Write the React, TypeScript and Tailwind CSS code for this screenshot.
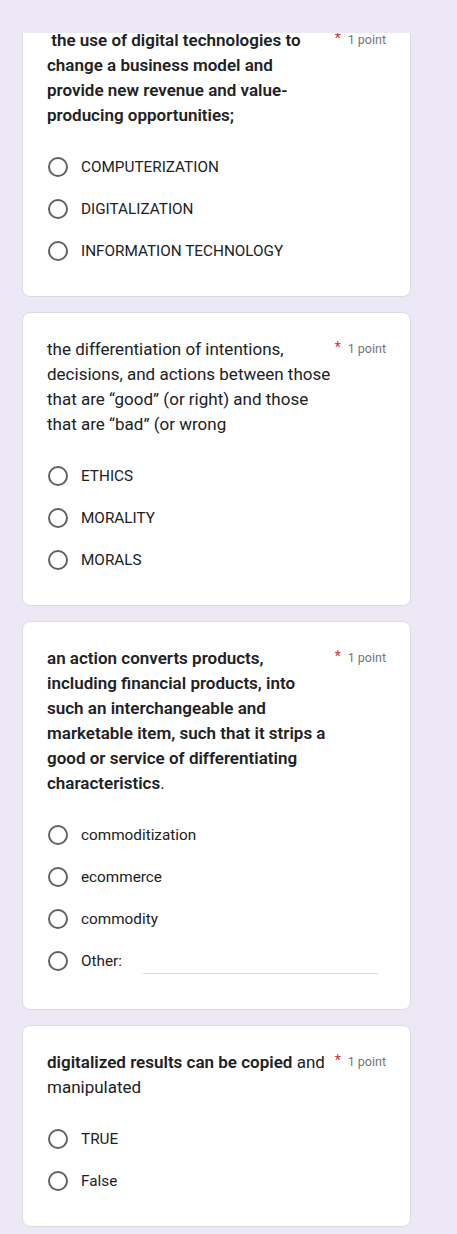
import React from "react";

type Question = {
  id: number;
  title: React.ReactNode;
  options: string[];
  other?: boolean;
  first?: boolean;
};

const questions: Question[] = [
  {
    id: 1,
    first: true,
    title: (
      <span className="font-semibold">
        {"\u00a0the use of digital technologies to change a business model and provide new revenue and value-producing opportunities;"}
      </span>
    ),
    options: ["COMPUTERIZATION", "DIGITALIZATION", "INFORMATION TECHNOLOGY"],
  },
  {
    id: 2,
    title: (
      <span>
        the differentiation of intentions, decisions, and actions between those that are “good” (or right) and those that are “bad” (or wrong
      </span>
    ),
    options: ["ETHICS", "MORALITY", "MORALS"],
  },
  {
    id: 3,
    title: (
      <span className="font-semibold">
        an action converts products, including financial products, into such an interchangeable and marketable item, such that it strips a good or service of differentiating characteristics<span className="font-normal">.</span>
      </span>
    ),
    options: ["commoditization", "ecommerce", "commodity"],
    other: true,
  },
  {
    id: 4,
    title: (
      <span>
        <span className="font-semibold">digitalized results can be copied</span> and manipulated
      </span>
    ),
    options: ["TRUE", "False"],
  },
];

function Radio() {
  return <span className="w-5 h-5 rounded-full border-2 border-[#5f6368] shrink-0" />;
}

function QuestionCard({ q }: { q: Question }) {
  return (
    <div
      className={`bg-white border border-[#dadce0] px-[24px] pb-[24px] ${
        q.first ? "rounded-b-lg border-t-0 pt-0 overflow-hidden" : "rounded-lg pt-[24px]"
      }`}
    >
      {/* header: title + points */}
      <div className={`flex items-start ${q.first ? "-mt-[5px]" : ""}`}>
        <div className="w-[284.5px] shrink-0 text-[17px] leading-[25px] text-[#202124]">{q.title}</div>
        <div className="flex-1 flex items-start justify-end gap-[7px] pt-[3px] whitespace-nowrap text-[12.5px] leading-[18px] text-[#70757a]">
          <span className="text-[#d93025] text-[14px] leading-[14px]">*</span>
          <span>1 point</span>
        </div>
      </div>

      {/* options */}
      <div className="mt-[18px] flex flex-col">
        {q.options.map((opt) => (
          <div key={opt} className="h-[42px] flex items-center gap-[13px] pl-px">
            <Radio />
            <span className="text-[15.3px] text-[#202124]">{opt}</span>
          </div>
        ))}
        {q.other && (
          <div className="h-[42px] mb-[3px] flex items-center gap-[13px] pl-px">
            <Radio />
            <span className="text-[15.3px] text-[#202124]">Other:</span>
            <div className="flex-1 ml-[8px] mr-[8px] mt-[24px] border-b border-[#dadce0]" />
          </div>
        )}
      </div>
    </div>
  );
}

export default function App() {
  return (
    <div
      className="min-h-screen bg-[#ede8f6] pt-[33px] pb-[8px]"
      style={{ fontFamily: "Roboto, 'Noto Sans', Arial, sans-serif" }}
    >
      <div className="ml-[22px] w-[389px] flex flex-col gap-[15px]">
        {questions.map((q) => (
          <QuestionCard key={q.id} q={q} />
        ))}
      </div>
    </div>
  );
}
